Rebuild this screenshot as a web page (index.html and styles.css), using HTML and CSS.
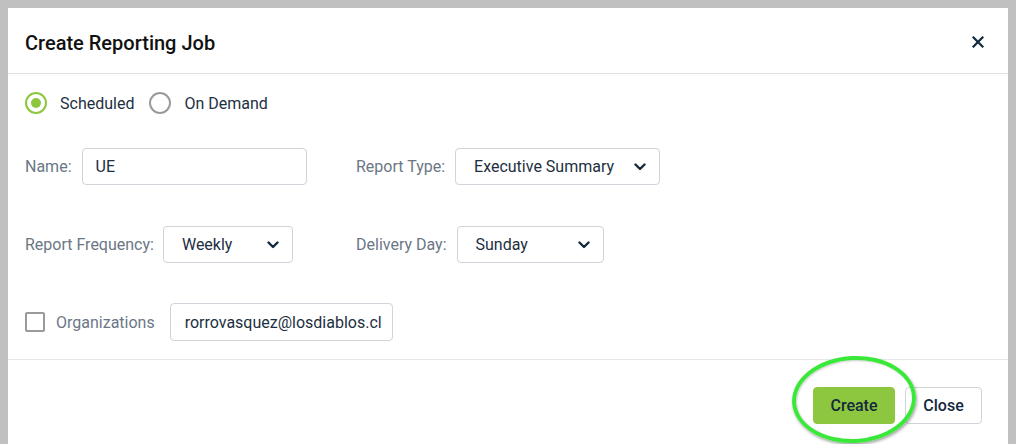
FILE: index.html
```html
<!DOCTYPE html>
<html>
<head>
<meta charset="utf-8">
<link rel="stylesheet" href="styles.css">
</head>
<body>
<div class="modal">
  <div class="modal-header">
    <h1 class="title">Create Reporting Job</h1>
    <button class="x-btn" aria-label="Close">
      <svg width="12" height="12" viewBox="0 0 12 12"><path d="M1.5 1.5 L10.5 10.5 M10.5 1.5 L1.5 10.5" stroke="#13293d" stroke-width="2.2" stroke-linecap="square"/></svg>
    </button>
  </div>
  <div class="modal-body">
    <div class="radios">
      <label class="radio"><span class="radio-dot checked"></span><span class="radio-text">Scheduled</span></label>
      <label class="radio"><span class="radio-dot"></span><span class="radio-text">On Demand</span></label>
    </div>
    <div class="grid">
      <div class="field">
        <span class="label">Name:</span>
        <div class="control w-name">UE</div>
      </div>
      <div class="field">
        <span class="label">Report Type:</span>
        <div class="control select w-type">Executive Summary<svg class="chev" width="12" height="8" viewBox="0 0 12 8"><path d="M1.5 1.5 L6 6 L10.5 1.5" fill="none" stroke="#13293d" stroke-width="2.4" stroke-linecap="round" stroke-linejoin="round"/></svg></div>
      </div>
      <div class="field">
        <span class="label">Report Frequency:</span>
        <div class="control select w-freq">Weekly<svg class="chev" width="12" height="8" viewBox="0 0 12 8"><path d="M1.5 1.5 L6 6 L10.5 1.5" fill="none" stroke="#13293d" stroke-width="2.4" stroke-linecap="round" stroke-linejoin="round"/></svg></div>
      </div>
      <div class="field">
        <span class="label">Delivery Day:</span>
        <div class="control select w-day">Sunday<svg class="chev" width="12" height="8" viewBox="0 0 12 8"><path d="M1.5 1.5 L6 6 L10.5 1.5" fill="none" stroke="#13293d" stroke-width="2.4" stroke-linecap="round" stroke-linejoin="round"/></svg></div>
      </div>
    </div>
    <div class="org-row">
      <span class="checkbox"></span>
      <span class="label org-label">Organizations</span>
      <div class="control w-email">rorrovasquez@losdiablos.cl</div>
    </div>
  </div>
  <div class="modal-footer">
    <div class="create-wrap">
      <button class="btn btn-create">Create</button>
      <span class="ring"></span>
    </div>
    <button class="btn btn-close">Close</button>
  </div>
</div>
</body>
</html>
```

FILE: styles.css
```css
* { box-sizing: border-box; }
html, body { height: 100%; }
body {
  margin: 0;
  padding: 8px 8px 0 8px;
  background: #c0c0c0;
  font-family: Roboto, "Liberation Sans", sans-serif;
  overflow: hidden;
}
.modal {
  width: 1000px;
  height: 440px;
  background: #fff;
}
.modal-header {
  height: 66px;
  padding: 0 24px 0 17px;
  display: flex;
  align-items: center;
  justify-content: space-between;
  border-bottom: 1px solid #dee2e6;
}
.title {
  margin: 0;
  font-size: 20px;
  font-weight: 500;
  color: #111;
  position: relative;
  top: 2px;
}
.x-btn {
  border: 0;
  background: none;
  padding: 0;
  width: 12px;
  height: 12px;
  display: flex;
  position: relative;
  top: 1px;
}
.modal-body {
  padding: 18px 17px 0 17px;
  height: 286px;
  border-bottom: 1px solid #e5e7ea;
}
.radios {
  display: flex;
  align-items: center;
  height: 22px;
  gap: 15px;
}
.radio {
  display: flex;
  align-items: center;
  gap: 13px;
}
.radio-dot {
  width: 22px;
  height: 22px;
  border-radius: 50%;
  border: 2px solid #9a9a9a;
  display: flex;
  align-items: center;
  justify-content: center;
}
.radio-dot.checked { border-color: #8dc63f; }
.radio-dot.checked::after {
  content: "";
  width: 10px;
  height: 10px;
  border-radius: 50%;
  background: #8dc63f;
}
.radio-text {
  font-size: 16px;
  color: #1d2f42;
}
.grid {
  margin-top: 34px;
  display: grid;
  grid-template-columns: 331px auto;
  row-gap: 41px;
}
.field {
  display: flex;
  align-items: center;
  gap: 10px;
}
.field:nth-child(3) { gap: 9px; }
.field:nth-child(4) { gap: 10px; }
.label {
  font-size: 16px;
  color: #6b7785;
}
.control {
  height: 37px;
  border: 1px solid #ced4da;
  border-radius: 4px;
  display: flex;
  align-items: center;
  padding: 0 13px 0 18px;
  font-size: 16px;
  color: #1d2f42;
}
.select { justify-content: space-between; }
.chev { flex: none; }
.w-name { width: 225px; padding-left: 13px; }
.w-type { width: 205px; }
.w-freq { width: 130px; }
.w-day { width: 147px; }
.org-row {
  margin-top: 40px;
  display: flex;
  align-items: center;
}
.checkbox {
  width: 20px;
  height: 20px;
  border: 2px solid #9a9a9a;
  border-radius: 2px;
  margin-right: 11px;
}
.org-label { margin-right: 15px; }
.w-email { width: 223px; height: 38px; padding-left: 14px; }
.modal-footer {
  display: flex;
  justify-content: flex-end;
  align-items: center;
  padding: 27px 26px 0 0;
  gap: 10px;
}
.btn {
  height: 37px;
  border-radius: 4px;
  font-family: Roboto, "Liberation Sans", sans-serif;
  font-size: 16px;
  font-weight: 500;
  color: #13293d;
  padding: 0;
}
.create-wrap { position: relative; }
.btn-create {
  width: 82px;
  background: #8dc63f;
  border: 1px solid #8dc63f;
  display: block;
}
.btn-close {
  width: 77px;
  background: #fff;
  border: 1px solid #ced4da;
}
.ring {
  position: absolute;
  left: -21px;
  top: -31px;
  width: 124px;
  height: 87px;
  border: 4px solid #3ae83a;
  border-radius: 50%;
  box-shadow: 1px 2px 3px rgba(0,0,0,0.35), inset 1px 1px 2px rgba(0,0,0,0.2);
  transform: rotate(-3deg);
  pointer-events: none;
}
```
